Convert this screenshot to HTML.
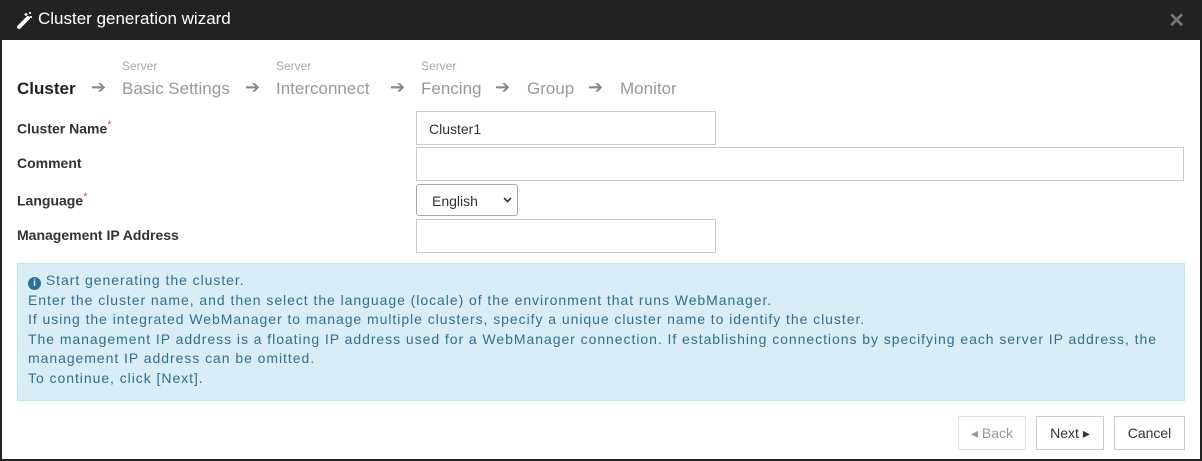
<!DOCTYPE html>
<html><head><style>
*{box-sizing:border-box;margin:0;padding:0}
body{width:1202px;height:461px;background:#222;font-family:"Liberation Sans",sans-serif;position:relative;overflow:hidden}
.hdr{position:absolute;left:0;top:0;width:1202px;height:40px;background:#222;color:#fff;font-size:17px}
.hdr .t{position:absolute;left:38px;top:9px}
.hdr .x{position:absolute;right:17px;top:8px;color:#777;font-size:20px;font-weight:bold}
.body{position:absolute;left:2px;top:40px;width:1198px;height:419px;background:#fff}
.a{position:absolute}
.step{font-size:17px;color:#999;top:39px}
.sm{font-size:12px;color:#aaa;top:19px}
.arr{top:37px;font-size:18px;color:#888}
.lbl{font-size:14px;font-weight:bold;color:#333}
.lbl sup{color:#d9534f;font-size:11px;font-weight:normal}
.inp{border:1px solid #ccc;height:34px;background:#fff;font-size:14px;color:#333;padding:9px 12px}
.info{left:15px;top:223px;width:1168px;height:138px;background:#d9edf7;border:1px solid #bce8f1;color:#31708f;font-size:14px;line-height:19.6px;padding:7px 10px;letter-spacing:0.95px;white-space:nowrap}
.btn{border:1px solid #ccc;height:34px;font-size:14px;color:#333;background:#fff;text-align:center;line-height:32px;top:376px}
</style></head><body>
<div class="hdr"><svg class="a" style="left:16px;top:11px" width="18" height="18" viewBox="0 0 18 18"><path d="M3 16L12 7" stroke="#fff" stroke-width="4" stroke-linecap="round"/><path d="M10 2v3M8.5 3.5h3M15 5v2M14 6h2M14 1v2M13 2h2" stroke="#fff" stroke-width="1.3"/></svg><span class="t">Cluster generation wizard</span><span class="x">✕</span></div>
<div class="body">
<div class="a step" style="left:15px;color:#222;font-weight:bold">Cluster</div>
<div class="a arr" style="left:89px">➔</div>
<div class="a sm" style="left:120px">Server</div>
<div class="a step" style="left:120px">Basic Settings</div>
<div class="a arr" style="left:243px">➔</div>
<div class="a sm" style="left:274px">Server</div>
<div class="a step" style="left:274px">Interconnect</div>
<div class="a arr" style="left:388px">➔</div>
<div class="a sm" style="left:419px">Server</div>
<div class="a step" style="left:419px">Fencing</div>
<div class="a arr" style="left:493px">➔</div>
<div class="a step" style="left:525px">Group</div>
<div class="a arr" style="left:586px">➔</div>
<div class="a step" style="left:618px">Monitor</div>

<div class="a lbl" style="left:15px;top:79px">Cluster Name<sup>*</sup></div>
<div class="a inp" style="left:414px;top:71px;width:300px">Cluster1</div>
<div class="a lbl" style="left:15px;top:115px">Comment</div>
<div class="a inp" style="left:414px;top:107px;width:768px"></div>
<div class="a lbl" style="left:15px;top:151px">Language<sup>*</sup></div>
<div class="a inp" style="left:414px;top:144px;width:102px;height:32px;padding:8px 15px;border-radius:3px;border-color:#aaa">English <svg style="position:absolute;right:5px;top:12px" width="9" height="6" viewBox="0 0 9 6"><path d="M1 1l3.5 3.5L8 1" stroke="#333" stroke-width="1.6" fill="none"/></svg></div>
<div class="a lbl" style="left:15px;top:187px">Management IP Address</div>
<div class="a inp" style="left:414px;top:179px;width:300px"></div>

<div class="a info"><span style="display:inline-block;width:13px;height:13px;border-radius:50%;background:#31708f;color:#d9edf7;font-size:10px;font-weight:bold;text-align:center;line-height:13px;vertical-align:-1px;letter-spacing:0">i</span> Start generating the cluster.<br>Enter the cluster name, and then select the language (locale) of the environment that runs WebManager.<br>If using the integrated WebManager to manage multiple clusters, specify a unique cluster name to identify the cluster.<br>The management IP address is a floating IP address used for a WebManager connection. If establishing connections by specifying each server IP address, the<br>management IP address can be omitted.<br>To continue, click [Next].</div>

<div class="a btn" style="left:956px;width:68px;color:#999;border-color:#ddd">◂ Back</div>
<div class="a btn" style="left:1034px;width:68px">Next ▸</div>
<div class="a btn" style="left:1112px;width:71px">Cancel</div>
</div>
</body></html>
